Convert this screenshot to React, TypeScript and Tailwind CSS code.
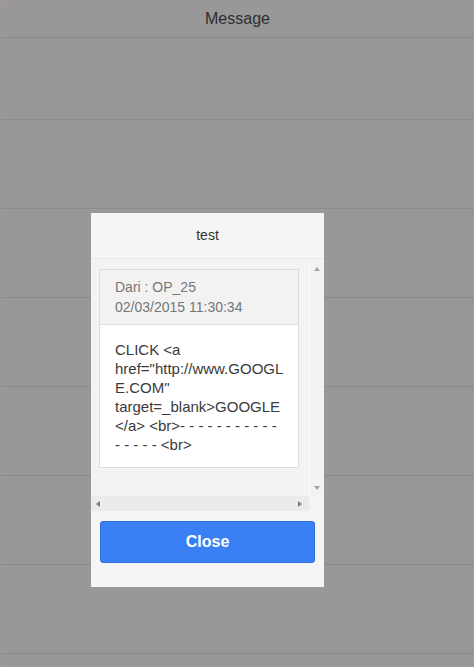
export default function App() {
  const rows = [0, 1, 2, 3, 4, 5];
  const bodyLines = [
    'CLICK <a',
    'href="http://www.GOOGL',
    'E.COM"',
    'target=_blank>GOOGLE',
    '</a> <br>- - - - - - - - - - -',
    '- - - - - <br>',
  ];
  return (
    <div className="relative h-[667px] w-[474px] overflow-hidden border-l border-t border-[#a39696] bg-[#989898] font-['Liberation_Sans',Arial,sans-serif]">
      <div className="flex h-[37px] items-center justify-center border-b border-[#8a8a8a] text-[16px] text-[#2e2e2e]">
        Message
      </div>
      <div className="h-[82px] border-b border-[#8a8a8a]" />
      {rows.map((r) => (
        <div key={r} className="h-[89px] border-b border-[#8a8a8a]" />
      ))}

      <div className="absolute left-[90px] top-[212px] flex w-[233px] flex-col bg-[#f5f5f5]">
        <div className="flex h-[45px] items-center justify-center text-[14px] text-[#333333]">test</div>
        <div className="border-t border-[#e9e9e9]">
          <div className="flex h-[237px]">
            <div className="flex-1 bg-[#f3f3f3] pl-[8px] pt-[10px]">
              <div className="w-[200px] border border-[#dddddd]">
                <div className="flex h-[55px] flex-col justify-center border-b border-[#dddddd] bg-[#f2f2f2] px-[15px] text-[14px] leading-[20px] text-[#777777]">
                  <div>Dari : OP_25</div>
                  <div>02/03/2015 11:30:34</div>
                </div>
                <div className="h-[142px] bg-white px-[15px] pt-[15px] text-[15px] leading-[19px] text-[#3a3a3a]">
                  {bodyLines.map((l, i) => (
                    <div key={i} className="whitespace-pre">
                      {l}
                    </div>
                  ))}
                </div>
              </div>
            </div>
            <div className="flex w-[15px] flex-col items-center justify-between border-l border-[#fafafa] bg-[#f3f3f3] pb-[6px] pt-[8px]">
              <div className="h-0 w-0 border-x-[3px] border-b-[4px] border-x-transparent border-b-[#a3a3a3]" />
              <div className="h-0 w-0 border-x-[3px] border-t-[4px] border-x-transparent border-t-[#a3a3a3]" />
            </div>
          </div>
          <div className="flex h-[15px]">
            <div className="flex w-[218px] items-center justify-between bg-[#ebebeb] pl-[5px] pr-[7px]">
              <div className="h-0 w-0 border-y-[3px] border-r-[4px] border-y-transparent border-r-[#7e7e7e]" />
              <div className="h-0 w-0 border-y-[3px] border-l-[4px] border-y-transparent border-l-[#7e7e7e]" />
            </div>
            <div className="flex-1" />
          </div>
        </div>
        <div className="px-[9px] pb-[24px] pt-[10px]">
          <button className="flex h-[42px] w-full items-center justify-center rounded-[3px] border border-[#2f6fdf] bg-[#3a80f4] text-[16px] font-bold text-white">
            Close
          </button>
        </div>
      </div>
    </div>
  );
}
